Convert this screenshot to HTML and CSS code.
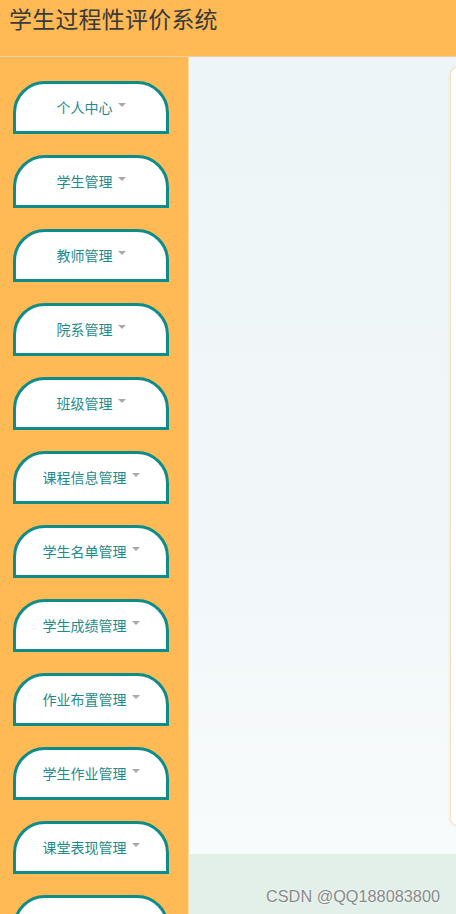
FILE: index.html
```html
<!DOCTYPE html>
<html lang="zh">
<head>
<meta charset="utf-8">
<title>学生过程性评价系统</title>
<link rel="stylesheet" href="styles.css">
</head>
<body>
<header class="topbar">
  <h1 class="title">学生过程性评价系统</h1>
</header>
<div class="layout">
  <nav class="sidebar">
    <div class="menu-btn"><span>个人中心</span><i class="caret"></i></div>
    <div class="menu-btn"><span>学生管理</span><i class="caret"></i></div>
    <div class="menu-btn"><span>教师管理</span><i class="caret"></i></div>
    <div class="menu-btn"><span>院系管理</span><i class="caret"></i></div>
    <div class="menu-btn"><span>班级管理</span><i class="caret"></i></div>
    <div class="menu-btn"><span>课程信息管理</span><i class="caret"></i></div>
    <div class="menu-btn"><span>学生名单管理</span><i class="caret"></i></div>
    <div class="menu-btn"><span>学生成绩管理</span><i class="caret"></i></div>
    <div class="menu-btn"><span>作业布置管理</span><i class="caret"></i></div>
    <div class="menu-btn"><span>学生作业管理</span><i class="caret"></i></div>
    <div class="menu-btn"><span>课堂表现管理</span><i class="caret"></i></div>
    <div class="menu-btn"></div>
  </nav>
  <div class="right">
    <main class="main">
      <div class="card"></div>
    </main>
    <footer class="footer"></footer>
  </div>
</div>
<div class="watermark">CSDN @QQ188083800</div>
</body>
</html>
```
FILE: styles.css
```css
html, body {
  margin: 0;
  padding: 0;
  height: 914px;
  overflow: hidden;
  font-family: "Noto Sans CJK SC", "Noto Sans", sans-serif;
}
body {
  background: #ffb955;
  position: relative;
}
.topbar {
  height: 56px;
  background: #ffb955;
  border-bottom: 1px solid #e9cfa6;
  box-sizing: content-box;
}
.title {
  margin: 0;
  padding: 1px 0 0 9px;
  font-size: 23px;
  font-weight: 400;
  line-height: 34px;
  color: #3a3a3a;
  letter-spacing: 0.2px;
}
.layout {
  display: flex;
  height: 857px;
}
.sidebar {
  width: 189px;
  flex: none;
  background: #ffb955;
  border-right: 1px solid #f3d9a6;
  padding-top: 24px;
  box-sizing: border-box;
  display: flex;
  flex-direction: column;
  gap: 21px;
  overflow: hidden;
}
.menu-btn {
  flex: none;
  width: 156px;
  height: 53px;
  margin-left: 13px;
  box-sizing: border-box;
  background: #ffffff;
  border: 3px solid #0d8c89;
  border-radius: 32px 32px 0 0;
  display: flex;
  align-items: center;
  justify-content: center;
  gap: 5px;
  color: #1f8a8c;
  font-size: 14px;
  padding-bottom: 2px;
}
.caret {
  width: 0;
  height: 0;
  border-left: 4px solid transparent;
  border-right: 4px solid transparent;
  border-top: 4px solid #a9a9a9;
  margin-top: -3px;
}
.right {
  flex: 1;
  display: flex;
  flex-direction: column;
  min-width: 0;
}
.main {
  flex: none;
  height: 797px;
  background: linear-gradient(180deg, #edf5f8 0%, #f1f7f9 60%, #f7fbfc 100%);
  padding: 10px 0 30px 261px;
  box-sizing: border-box;
  overflow: hidden;
}
.card {
  height: 757px;
  width: 40px;
  background: #ffffff;
  border: 1px solid #f6e2bf;
  border-radius: 8px;
  box-shadow: 0 0 3px rgba(240, 190, 110, 0.35);
}
.footer {
  flex: 1;
  background: #e3f0ea;
}
.watermark {
  position: absolute;
  left: 266px;
  top: 886px;
  font-family: "Liberation Sans", Arial, sans-serif;
  font-size: 16.3px;
  line-height: 20px;
  color: #8a8a8a;
  text-shadow: 0 0 2px #ffffff;
}
```
